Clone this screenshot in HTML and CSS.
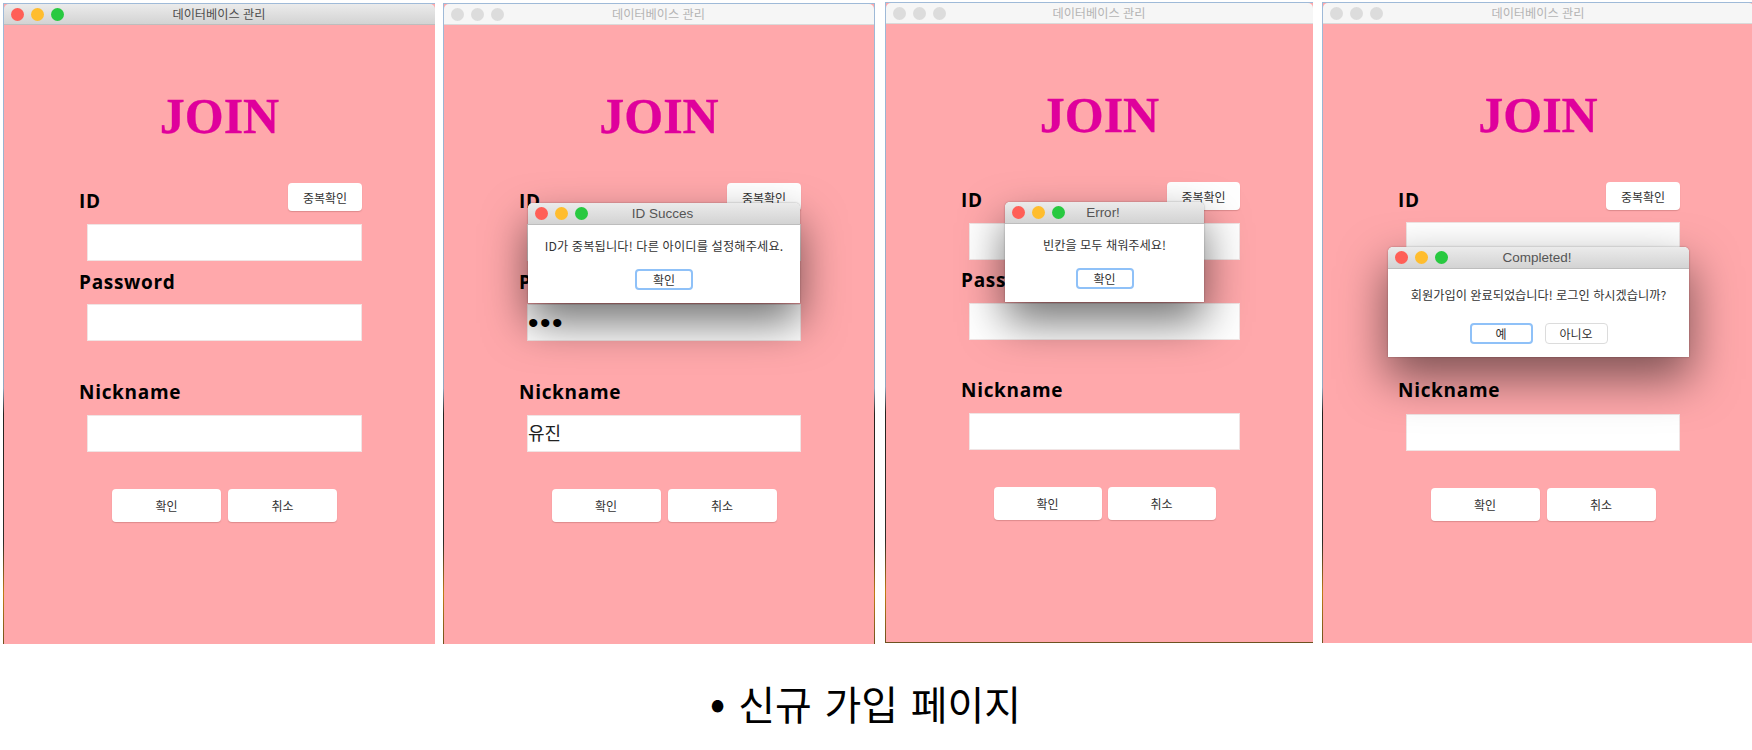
FILE: index.html
```html
<!DOCTYPE html>
<html lang="ko">
<head>
  <meta charset="UTF-8">
  <title>신규 가입 페이지</title>
  <link rel="stylesheet" href="styles.css">
</head>
<body>
  <div class="shots">

    <!-- 기본 화면 -->
    <div class="shot shot-1">
      <div class="titlebar">
        <div class="lights"><span class="light red"></span><span class="light yellow"></span><span class="light green"></span></div>
        <div class="title">데이터베이스 관리</div>
      </div>
      <div class="form">
        <h1 class="join">JOIN</h1>
        <div class="id-row"><label>ID</label><button class="btn-check">중복확인</button></div>
        <input class="field field-id" type="text" readonly>
        <label class="label-pass">Password</label>
        <input class="field field-pass" type="text" readonly>
        <label class="label-nick">Nickname</label>
        <input class="field field-nick" type="text" readonly>
        <div class="actions"><button class="btn-action">확인</button><button class="btn-action">취소</button></div>
      </div>
    </div>

    <!-- 아이디 중복 -->
    <div class="shot shot-2 inactive">
      <div class="titlebar">
        <div class="lights"><span class="light"></span><span class="light"></span><span class="light"></span></div>
        <div class="title">데이터베이스 관리</div>
      </div>
      <div class="form">
        <h1 class="join">JOIN</h1>
        <div class="id-row"><label>ID</label><button class="btn-check">중복확인</button></div>
        <input class="field field-id" type="text" readonly>
        <label class="label-pass">Password</label>
        <input class="field field-pass field-dots" type="password" value="123" readonly>
        <label class="label-nick">Nickname</label>
        <input class="field field-nick field-typed" type="text" value="유진" readonly>
        <div class="actions"><button class="btn-action">확인</button><button class="btn-action">취소</button></div>
      </div>
      <div class="dialog dialog-succes">
        <div class="titlebar">
          <div class="lights"><span class="light red"></span><span class="light yellow"></span><span class="light green"></span></div>
          <div class="title">ID Succes</div>
        </div>
        <div class="dialog-body">
          <p class="message">ID가 중복됩니다! 다른 아이디를 설정해주세요.</p>
          <div class="dialog-buttons"><button class="btn-dialog default">확인</button></div>
        </div>
      </div>
    </div>

    <!-- 빈칸 오류 -->
    <div class="shot shot-3 inactive">
      <div class="titlebar">
        <div class="lights"><span class="light"></span><span class="light"></span><span class="light"></span></div>
        <div class="title">데이터베이스 관리</div>
      </div>
      <div class="form">
        <h1 class="join">JOIN</h1>
        <div class="id-row"><label>ID</label><button class="btn-check">중복확인</button></div>
        <input class="field field-id" type="text" readonly>
        <label class="label-pass">Password</label>
        <input class="field field-pass" type="text" readonly>
        <label class="label-nick">Nickname</label>
        <input class="field field-nick" type="text" readonly>
        <div class="actions"><button class="btn-action">확인</button><button class="btn-action">취소</button></div>
      </div>
      <div class="dialog dialog-error">
        <div class="titlebar">
          <div class="lights"><span class="light red"></span><span class="light yellow"></span><span class="light green"></span></div>
          <div class="title">Error!</div>
        </div>
        <div class="dialog-body">
          <p class="message">빈칸을 모두 채워주세요!</p>
          <div class="dialog-buttons"><button class="btn-dialog default">확인</button></div>
        </div>
      </div>
    </div>

    <!-- 가입 완료 -->
    <div class="shot shot-4 inactive">
      <div class="titlebar">
        <div class="lights"><span class="light"></span><span class="light"></span><span class="light"></span></div>
        <div class="title">데이터베이스 관리</div>
      </div>
      <div class="form">
        <h1 class="join">JOIN</h1>
        <div class="id-row"><label>ID</label><button class="btn-check">중복확인</button></div>
        <input class="field field-id" type="text" readonly>
        <label class="label-pass">Password</label>
        <input class="field field-pass" type="text" readonly>
        <label class="label-nick">Nickname</label>
        <input class="field field-nick" type="text" readonly>
        <div class="actions"><button class="btn-action">확인</button><button class="btn-action">취소</button></div>
      </div>
      <div class="dialog dialog-done">
        <div class="titlebar">
          <div class="lights"><span class="light red"></span><span class="light yellow"></span><span class="light green"></span></div>
          <div class="title">Completed!</div>
        </div>
        <div class="dialog-body">
          <p class="message">회원가입이 완료되었습니다! 로그인 하시겠습니까?</p>
          <div class="dialog-buttons"><button class="btn-dialog default">예</button><button class="btn-dialog">아니오</button></div>
        </div>
      </div>
    </div>

  </div>

  <p class="caption"><span class="bullet">•</span> 신규 가입 페이지</p>
</body>
</html>
```

FILE: styles.css
```css
/* Reset */
* {
  margin: 0;
  padding: 0;
  box-sizing: border-box;
}

body {
  width: 1752px;
  height: 750px;
  overflow: hidden;
  background: #fff;
  font-family: "Noto Sans CJK KR", "Noto Sans", sans-serif;
}

/* Row of screenshots */
.shots {
  display: flex;
  align-items: flex-start;
  padding-left: 3px;
}

.shot {
  position: relative;
  flex: none;
  width: 432px;
  height: 641px;
  margin-top: 3px;
  background: #ffa8ab;
  border-style: solid;
  border-width: 1px 0 0 1px;
  border-image: linear-gradient(#9fbad8 0, #93a7bf 60%, #26221f 64%, #2f2a26 84%, #c07c14 92%, #6d5120 100%) 1;
}

.shot-2 {
  margin-left: 8px;
  border-right-width: 1px;
}

.shot-3 {
  width: 428px;
  margin-left: 10px;
  margin-top: 2px;
  border-bottom-width: 1px;
}

.shot-4 {
  margin-left: 9px;
  margin-top: 2px;
}

/* Title bar */
.titlebar {
  display: grid;
  grid-template-columns: 1fr auto 1fr;
  align-items: center;
  height: 21px;
  padding-left: 7px;
  border-radius: 5px 5px 0 0;
  border-bottom: 1px solid #bdbdbd;
  background: linear-gradient(#ebebeb, #d3d3d3);
}

.lights {
  display: flex;
  gap: 7px;
}

.light {
  width: 13px;
  height: 13px;
  border-radius: 50%;
  background: #dcdcdc;
}

.light.red { background: #ff5f57; }
.light.yellow { background: #ffbd2e; }
.light.green { background: #28c940; }

.title {
  font-size: 12.2px;
  line-height: 14px;
  color: #4d4d4d;
  transform: translateX(-4px);
}

.inactive > .titlebar {
  background: #f6f6f6;
  border-bottom-color: #dadada;
}

.inactive > .titlebar .title {
  color: #b4b4b4;
}

/* Form */
.form {
  display: flex;
  flex-direction: column;
  padding: 61px 73px 0 75px;
}

.join {
  height: 60px;
  margin: 0 -73px 37px -75px;
  text-align: center;
  font-family: "Liberation Serif", serif;
  font-size: 50px;
  line-height: 60px;
  font-weight: bold;
  -webkit-text-stroke: 0.3px #df009c;
  color: #df009c;
}

label {
  display: block;
  height: 20px;
  font-family: "Open Sans", sans-serif;
  font-size: 19px;
  line-height: 20px;
  font-weight: 700;
  letter-spacing: 0.7px;
  color: #000;
}

.id-row {
  display: flex;
  justify-content: space-between;
  align-items: flex-end;
  height: 28px;
}

.btn-check {
  width: 74px;
  height: 28px;
  border: none;
  border-radius: 4px;
  background: #fff;
  box-shadow: 0 1px 1px rgba(190, 110, 110, 0.5);
  font-family: inherit;
  font-size: 12px;
  color: #333;
}

.field {
  display: block;
  width: calc(100% - 8px);
  height: 37px;
  margin-left: 8px;
  padding: 0 2px;
  border: 1px solid #f0e4e4;
  border-radius: 0;
  outline: none;
  background: #fff;
  font-family: inherit;
  font-size: 18px;
  color: #222;
}

.field-dots {
  padding-left: 0;
  font-family: "Liberation Sans", sans-serif;
  font-size: 30px;
  letter-spacing: 1.5px;
  color: #000;
}

.field-typed {
  padding: 0 0 3px 0;
}

.field-id { margin-top: 13px; }
.label-pass { margin-top: 11px; }
.field-pass { margin-top: 12px; }
.label-nick { margin-top: 41px; }
.field-nick { margin-top: 13px; }

.actions {
  display: flex;
  justify-content: center;
  gap: 7px;
  margin: 37px 0 0 8px;
}

.btn-action {
  width: 109px;
  height: 33px;
  border: none;
  border-radius: 4px;
  background: #fff;
  box-shadow: 0 1px 1px rgba(190, 110, 110, 0.5);
  font-family: inherit;
  font-size: 12px;
  color: #333;
}

/* Small differences between the shots */
.shot-3 .form { padding-left: 75px; }
.shot-3 .btn-check { width: 73px; }
.shot-3 .label-pass { margin-top: 10px; }
.shot-3 .field-pass { margin-top: 13px; }
.shot-3 .label-nick { margin-top: 40px; }
.shot-3 .actions { gap: 6px; }
.shot-3 .btn-action { width: 108px; }

.shot-4 .form { padding-right: 74px; }
.shot-4 .field-id { margin-top: 12px; }
.shot-4 .label-pass { margin-top: 10px; }
.shot-4 .field-pass { margin-top: 13px; }
.shot-4 .field-nick { margin-top: 14px; }

/* Dialogs */
.dialog {
  position: absolute;
  display: flex;
  flex-direction: column;
  background: #fff;
  border-radius: 5px 5px 0 0;
  box-shadow: 0 20px 44px rgba(0, 0, 0, 0.55), 0 0 2px rgba(0, 0, 0, 0.35);
}

.dialog .titlebar { height: 22px; }

.dialog .title {
  font-family: "Liberation Sans", sans-serif;
  font-size: 13.5px;
  color: #555;
  transform: translateX(-5px);
}

.dialog-succes { left: 84px; top: 199px; width: 272px; height: 100px; }
.dialog-error { left: 119px; top: 199px; width: 199px; height: 100px; }
.dialog-done {
  left: 65px;
  top: 244px;
  width: 301px;
  height: 110px;
  box-shadow: 0 20px 46px 2px rgba(0, 0, 0, 0.5), 0 0 2px rgba(0, 0, 0, 0.35);
}

.dialog-body {
  flex: 1;
  display: flex;
  flex-direction: column;
  align-items: center;
  padding-top: 12px;
}

.message {
  font-size: 12.2px;
  line-height: 18px;
  color: #333;
}

.dialog-succes .message { letter-spacing: 0.15px; }

.dialog-buttons {
  display: flex;
  gap: 12px;
  margin-top: 14px;
}

.dialog-done .dialog-body { padding-top: 17px; }
.dialog-done .dialog-buttons { margin-top: 19px; }

.btn-dialog {
  width: 58px;
  height: 21px;
  border: 1px solid #dcdcdc;
  border-radius: 4px;
  background: #fff;
  font-family: inherit;
  font-size: 12px;
  line-height: 16px;
  color: #333;
}

.btn-dialog.default {
  border: 2px solid #8fc1f8;
}

.dialog-done .btn-dialog { width: 63px; }

/* Caption */
.caption {
  padding: 31px 21px 0 0;
  text-align: center;
  font-size: 40px;
  line-height: 50px;
  word-spacing: 1.5px;
  color: #000;
}

.bullet {
  font-size: 46px;
}
```
